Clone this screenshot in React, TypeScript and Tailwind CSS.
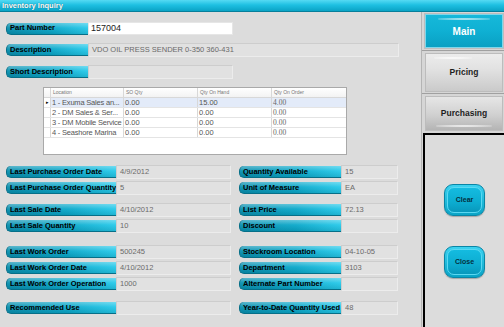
import React from "react";

const labelCls =
  "flex items-center h-[12px] pl-[3px] rounded-l-[5px] border-l border-b border-[#066f88] text-[7.5px] font-bold text-black whitespace-nowrap bg-[linear-gradient(180deg,rgba(255,255,255,0.35)_0%,rgba(255,255,255,0.05)_45%,rgba(0,0,0,0.10)_100%),linear-gradient(90deg,#0890b0_0%,#0aa8ca_55%,#25c9ea_100%)]";

const fieldCls =
  "flex items-center h-[14px] pl-[3px] bg-[#e1e1e1] border border-[#cdcdcd] border-b-[#ececec] border-r-[#ececec] text-[7.5px] text-[#6a6a6a] whitespace-nowrap";

function Row({
  label,
  value,
  lw,
  fw,
}: {
  label: string;
  value: string;
  lw: string;
  fw: string;
}) {
  return (
    <div className="flex items-center h-[14px]">
      <div className={`${labelCls} ${lw}`}>{label}</div>
      <div className={`${fieldCls} ${fw}`}>{value}</div>
    </div>
  );
}

const rows = [
  ["1 - Exuma Sales an...", "0.00", "15.00", "4.00"],
  ["2 - DM Sales & Ser...", "0.00", "0.00", "0.00"],
  ["3 - DM Mobile Service", "0.00", "0.00", "0.00"],
  ["4 - Seashore Marina", "0.00", "0.00", "0.00"],
];

function Grid() {
  return (
    <div className="ml-[37px] w-[304px] h-[68px] bg-white border border-[#a9a9a9] flex flex-col">
      <div className="grid grid-cols-[7px_73px_74px_74px_1fr] h-[10px] border-b border-[#d8d8d8] bg-[linear-gradient(180deg,#ffffff,#f3f3f3)] text-[5px] text-[#777]">
        <div className="border-r border-[#d8d8d8]" />
        <div className="pl-[2px] pt-[1px] border-r border-[#d8d8d8]">Location</div>
        <div className="pl-[2px] pt-[1px] border-r border-[#d8d8d8]">SO Qty</div>
        <div className="pl-[2px] pt-[1px] border-r border-[#d8d8d8]">Qty On Hand</div>
        <div className="pl-[2px] pt-[1px]">Qty On Order</div>
      </div>
      {rows.map((r, i) => (
        <div
          key={i}
          className={`grid grid-cols-[7px_73px_74px_74px_1fr] h-[10px] border-b border-[#e4e4e4] text-[7.5px] leading-[9px] text-[#555] ${
            i === 0 ? "bg-[#e3ebf9]" : "bg-white"
          }`}
        >
          <div className="border-r border-[#d8d8d8] bg-white flex items-center justify-center text-[5px] text-black">
            {i === 0 ? "▸" : ""}
          </div>
          <div className="pl-[1px] border-r border-[#d8d8d8] whitespace-nowrap overflow-visible tracking-[-0.2px]">{r[0]}</div>
          <div className="pl-[1px] border-r border-[#d8d8d8]">{r[1]}</div>
          <div className="pl-[1px] border-r border-[#d8d8d8]">{r[2]}</div>
          <div className="pl-[1px] font-['Liberation_Serif',serif] text-[#666]">{r[3]}</div>
        </div>
      ))}
    </div>
  );
}

function RoundBtn({ text }: { text: string }) {
  return (
    <div className="w-[41px] h-[32px] rounded-[9px] border border-[#0a86a6] p-[2px] bg-[linear-gradient(180deg,#3cd2f0,#0aa4c6)] shadow-[0_1px_1px_rgba(0,0,0,0.25)]">
      <div className="w-full h-full rounded-[7px] border border-[#5ad8f2] bg-[linear-gradient(180deg,#14bbe0_0%,#0cacd0_60%,#0898bc_100%)] flex items-center justify-center text-[7px] font-bold text-[#04303f]">
        {text}
      </div>
    </div>
  );
}

export default function App() {
  return (
    <div className="w-[504px] h-[327px] overflow-hidden bg-[#dcdcdc] font-['Liberation_Sans',Arial,sans-serif] flex flex-col">
      {/* Title bar */}
      <div className="h-[12px] shrink-0 flex items-center pl-[2px] border-b border-[#077f9b] bg-[linear-gradient(180deg,#55daf3_0%,#1ec0e2_45%,#0aa3c5_100%)] text-[7.5px] font-bold text-white [text-shadow:0_0_1px_#035468]">
        Inventory Inquiry
      </div>
      <div className="flex flex-1">
        {/* Left panel */}
        <div className="w-[421px] pl-[6px] pt-[10px] flex flex-col">
          <div className="flex items-center h-[13px]">
            <div className={`${labelCls} w-[82px]`}>Part Number</div>
            <div className="h-[13px] w-[145px] bg-white border border-[#e6e6e6] flex items-center pl-[2px] text-[9px] text-[#222]">
              157004
            </div>
          </div>
          <div className="mt-[8px]">
            <Row label="Description" value="VDO OIL PRESS SENDER 0-350 360-431" lw="w-[82px]" fw="w-[311px]" />
          </div>
          <div className="mt-[8px]">
            <Row label="Short Description" value="" lw="w-[82px]" fw="w-[145px]" />
          </div>
          <div className="mt-[8px]">
            <Grid />
          </div>
          <div className="mt-[10px] flex">
            <div className="flex flex-col w-[233px]">
              <div className="flex flex-col gap-[2px]">
                <Row label="Last Purchase Order Date" value="4/9/2012" lw="w-[110px]" fw="w-[115px]" />
                <Row label="Last Purchase Order Quantity" value="5" lw="w-[110px]" fw="w-[115px]" />
              </div>
              <div className="flex flex-col gap-[2px] mt-[8px]">
                <Row label="Last Sale Date" value="4/10/2012" lw="w-[110px]" fw="w-[115px]" />
                <Row label="Last Sale Quantity" value="10" lw="w-[110px]" fw="w-[115px]" />
              </div>
              <div className="flex flex-col gap-[2px] mt-[12px]">
                <Row label="Last Work Order" value="500245" lw="w-[110px]" fw="w-[115px]" />
                <Row label="Last Work Order Date" value="4/10/2012" lw="w-[110px]" fw="w-[115px]" />
                <Row label="Last Work Order Operation" value="1000" lw="w-[110px]" fw="w-[115px]" />
              </div>
              <div className="flex flex-col mt-[10px]">
                <Row label="Recommended Use" value="" lw="w-[110px]" fw="w-[115px]" />
              </div>
            </div>
            <div className="flex flex-col">
              <div className="flex flex-col gap-[2px]">
                <Row label="Quantity Available" value="15" lw="w-[102px]" fw="w-[57px]" />
                <Row label="Unit of Measure" value="EA" lw="w-[102px]" fw="w-[57px]" />
              </div>
              <div className="flex flex-col gap-[2px] mt-[8px]">
                <Row label="List Price" value="72.13" lw="w-[102px]" fw="w-[57px]" />
                <Row label="Discount" value="" lw="w-[102px]" fw="w-[57px]" />
              </div>
              <div className="flex flex-col gap-[2px] mt-[12px]">
                <Row label="Stockroom Location" value="04-10-05" lw="w-[102px]" fw="w-[57px]" />
                <Row label="Department" value="3103" lw="w-[102px]" fw="w-[57px]" />
                <Row label="Alternate Part Number" value="" lw="w-[102px]" fw="w-[57px]" />
              </div>
              <div className="flex flex-col mt-[10px]">
                <Row label="Year-to-Date Quantity Used" value="48" lw="w-[102px]" fw="w-[57px]" />
              </div>
            </div>
          </div>
        </div>

        {/* Right column */}
        <div className="flex-1 flex flex-col border-l border-[#b4b4b4] bg-[#d6d6d6]">
          <div className="h-[39px] pt-[2px] pl-[3px] pr-[1px] border-b border-[#a0a0a0]">
            <div className="relative h-[34px] border border-[#7fd6ea] outline outline-1 outline-[#bdbdbd] bg-[linear-gradient(180deg,#16b8da_0%,#0fb0d3_50%,#0aa0c3_100%)] flex items-center justify-center text-[10px] font-bold text-white">
              <div className="absolute top-[3px] left-[12px] right-[12px] h-[2px] rounded-full bg-[radial-gradient(ellipse_at_center,rgba(255,255,255,0.9),rgba(255,255,255,0))]" />
              Main
            </div>
          </div>
          <div className="h-[43px] pt-[2px] pl-[3px] pr-[1px] border-b border-[#a0a0a0]">
            <div className="relative h-[39px] border border-[#bcbcbc] bg-[linear-gradient(180deg,#ececec_0%,#e2e2e2_40%,#cacaca_100%)] flex items-center justify-center text-[8.5px] font-bold text-[#1e1e1e]">
              <div className="absolute top-[3px] left-[8px] right-[30px] h-[2px] rounded-full bg-[radial-gradient(ellipse_at_center,rgba(255,255,255,1),rgba(255,255,255,0))]" />
              Pricing
            </div>
          </div>
          <div className="h-[39px] pt-[2px] pl-[3px] pr-[1px]">
            <div className="relative h-[35px] border border-[#bcbcbc] bg-[linear-gradient(180deg,#e6e6e6_0%,#d0d0d0_55%,#b4b4b4_100%)] flex items-center justify-center text-[8.5px] font-bold text-[#1e1e1e]">
              <div className="absolute bottom-[3px] left-[10px] right-[10px] h-[2px] rounded-full bg-[radial-gradient(ellipse_at_center,rgba(255,255,255,1),rgba(255,255,255,0))]" />
              Purchasing
            </div>
          </div>
          <div className="flex-1 ml-[1px] border-l-2 border-t-2 border-black bg-[#dcdcdc] pl-[19px] pt-[49px] flex flex-col gap-[30px]">
            <RoundBtn text="Clear" />
            <RoundBtn text="Close" />
          </div>
        </div>
      </div>
    </div>
  );
}
